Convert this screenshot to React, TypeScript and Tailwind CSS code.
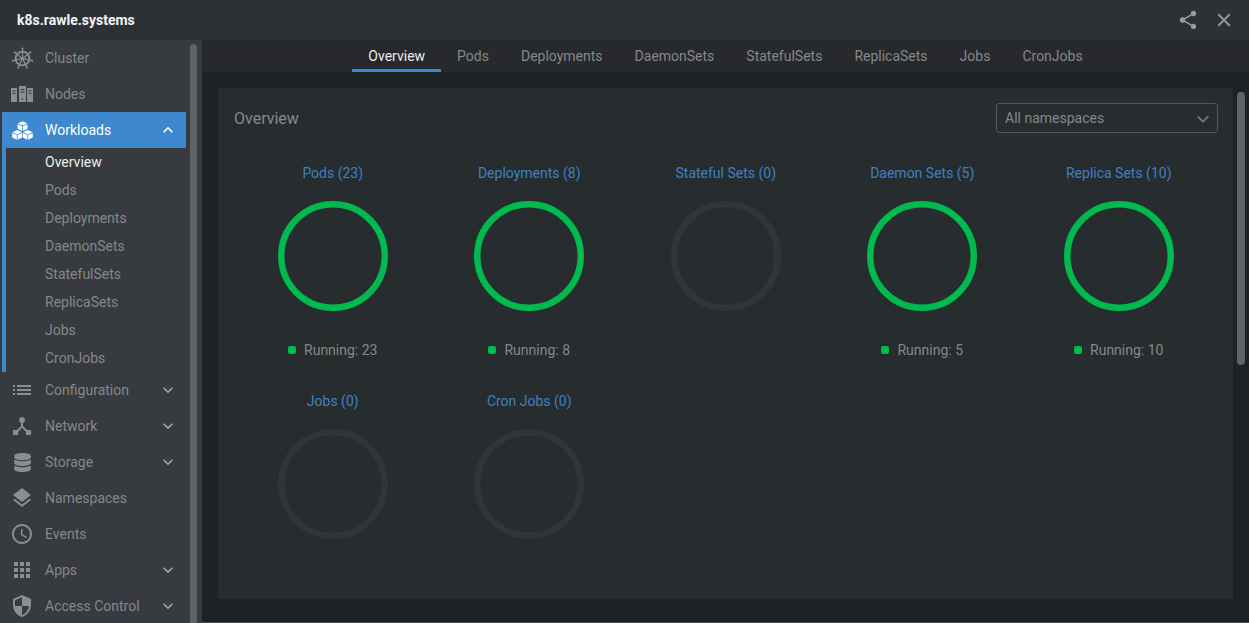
import type { ReactNode } from 'react';
import { FaDatabase } from 'react-icons/fa';
import {
  MdAccessTime,
  MdApps,
  MdClose,
  MdDeviceHub,
  MdExpandLess,
  MdExpandMore,
  MdLayers,
  MdList,
  MdSecurity,
  MdShare,
} from 'react-icons/md';

interface NavItem {
  label: string;
  icon: ReactNode;
  chevron?: boolean;
}

function WheelIcon() {
  const spokes = [0, 51.4, 102.8, 154.2, 205.6, 257, 308.4];
  return (
    <svg viewBox="0 0 24 24" className="w-[23px] h-[23px]" fill="none" stroke="currentColor">
      <circle cx="12" cy="12" r="7.2" strokeWidth="2" />
      <circle cx="12" cy="12" r="1.8" fill="currentColor" strokeWidth="0" />
      {spokes.map((angle) => (
        <g key={angle} transform={`rotate(${angle} 12 12)`}>
          <path d="M12 11V1.2" strokeWidth="1.3" />
          <circle cx="12" cy="1.5" r="1" fill="currentColor" strokeWidth="0" />
        </g>
      ))}
    </svg>
  );
}

function NodesIcon() {
  return (
    <svg viewBox="0 0 22 16" className="w-[22px] h-4" fill="currentColor">
      <path fillRule="evenodd" d="M0 2h6v14H0zM1.5 4.5v1H4.5v-1zm0 2.5v1H4.5V7z" />
      <path fillRule="evenodd" d="M8 0h7v16H8zM9.7 3v1h3.6V3zm0 2.5v1h3.6v-1zM10.5 12.5v1h2v-1z" />
      <path fillRule="evenodd" d="M16 2h6v14h-6zM17.5 4.5v1h3v-1zm0 2.5v1h3V7z" />
    </svg>
  );
}

function Cube({ x, y }: { x: number; y: number }) {
  return (
    <>
      <polygon points={`${x},${y - 4.8} ${x + 4.8},${y - 2.6} ${x},${y - 0.4} ${x - 4.8},${y - 2.6}`} />
      <polygon points={`${x - 5},${y - 1.8} ${x - 0.4},${y + 0.3} ${x - 0.4},${y + 5} ${x - 5},${y + 2.8}`} />
      <polygon points={`${x + 5},${y - 1.8} ${x + 0.4},${y + 0.3} ${x + 0.4},${y + 5} ${x + 5},${y + 2.8}`} />
    </>
  );
}

function CubesIcon() {
  return (
    <svg viewBox="0 0 21 19" className="w-[21px] h-[19px]" fill="currentColor">
      <Cube x={10.5} y={5} />
      <Cube x={5.2} y={13.8} />
      <Cube x={15.8} y={13.8} />
    </svg>
  );
}

const topItems: NavItem[] = [
  { label: 'Cluster', icon: <WheelIcon /> },
  { label: 'Nodes', icon: <NodesIcon /> },
];

const subItems = ['Overview', 'Pods', 'Deployments', 'DaemonSets', 'StatefulSets', 'ReplicaSets', 'Jobs', 'CronJobs'];

const bottomItems: NavItem[] = [
  { label: 'Configuration', icon: <MdList className="w-[24px] h-[24px]" />, chevron: true },
  { label: 'Network', icon: <MdDeviceHub className="w-[24px] h-[24px]" />, chevron: true },
  { label: 'Storage', icon: <FaDatabase className="w-[17px] h-[19px]" />, chevron: true },
  { label: 'Namespaces', icon: <MdLayers className="w-[24px] h-[24px]" /> },
  { label: 'Events', icon: <MdAccessTime className="w-[24px] h-[24px]" /> },
  { label: 'Apps', icon: <MdApps className="w-[24px] h-[24px]" />, chevron: true },
  { label: 'Access Control', icon: <MdSecurity className="w-[24px] h-[24px]" />, chevron: true },
];

const tabs = ['Overview', 'Pods', 'Deployments', 'DaemonSets', 'StatefulSets', 'ReplicaSets', 'Jobs', 'CronJobs'];

const charts = [
  { title: 'Pods (23)', running: 23 },
  { title: 'Deployments (8)', running: 8 },
  { title: 'Stateful Sets (0)', running: 0 },
  { title: 'Daemon Sets (5)', running: 5 },
  { title: 'Replica Sets (10)', running: 10 },
  { title: 'Jobs (0)', running: 0 },
  { title: 'Cron Jobs (0)', running: 0 },
];

function NavRow({ label, icon, chevron }: NavItem) {
  return (
    <div className="h-9 flex items-center text-[#85888b]">
      <div className="w-[43px] pr-[3px] flex justify-center items-center text-[#8b8d90]">{icon}</div>
      <span className="text-sm flex-1">{label}</span>
      {chevron && <MdExpandMore className="w-5 h-5 mr-2 text-[#a0a2a5]" />}
    </div>
  );
}

function Chart({ title, running }: { title: string; running: number }) {
  return (
    <div className="h-[228px] flex flex-col items-center">
      <div className="h-5 text-sm leading-5 text-[#3b82c4]">{title}</div>
      <svg viewBox="0 0 110 110" className="w-[110px] h-[110px] mt-[18px]">
        <circle cx="55" cy="55" r="51.75" fill="none" strokeWidth="6.5" stroke={running > 0 ? '#00ba50' : '#303538'} />
      </svg>
      {running > 0 && (
        <div className="mt-[29px] h-5 flex items-center gap-2 text-sm text-[#85888b]">
          <span className="w-2 h-2 rounded-[2px] bg-[#00ba50]" />
          <span>Running: {running}</span>
        </div>
      )}
    </div>
  );
}

export default function App() {
  return (
    <div className="h-[623px] w-full overflow-hidden flex flex-col bg-[#1e2225] font-['Roboto',sans-serif]">
      <header className="h-10 shrink-0 flex items-center justify-between bg-[#2d3136] pl-[17px] pr-[14px]">
        <span className="text-sm font-bold text-[#f2f3f4]">k8s.rawle.systems</span>
        <div className="flex items-center gap-[14px] text-[#9a9c9f]">
          <MdShare className="w-[22px] h-[22px]" />
          <MdClose className="w-[22px] h-[22px]" />
        </div>
      </header>
      <div className="flex-1 flex min-h-0">
        <aside className="w-[202px] shrink-0 flex pl-[2px] bg-[#373a3e] overflow-hidden">
          <nav className="w-[184px] shrink-0">
            {topItems.map((item) => (
              <NavRow key={item.label} {...item} />
            ))}
            <div className="h-9 flex items-center bg-[#3d88ce] text-white">
              <div className="w-[43px] pr-[3px] flex justify-center items-center">
                <CubesIcon />
              </div>
              <span className="text-sm flex-1">Workloads</span>
              <MdExpandLess className="w-5 h-5 mr-2" />
            </div>
            <div className="border-l-4 border-[#3d88ce]">
              {subItems.map((item, i) => (
                <div key={item} className={`h-7 flex items-center pl-[39px] text-sm ${i === 0 ? 'text-[#eceded]' : 'text-[#85888b]'}`}>
                  {item}
                </div>
              ))}
            </div>
            {bottomItems.map((item) => (
              <NavRow key={item.label} {...item} />
            ))}
          </nav>
          <div className="ml-[4px] mt-[4px] w-[7px] h-[620px] rounded-t bg-[#5f6266]" />
        </aside>
        <main className="relative flex-1 min-w-0 flex flex-col border-b border-[#4a4d50]">
          <div className="h-8 shrink-0 flex justify-center bg-[#27292c]">
            {tabs.map((tab, i) => (
              <div
                key={tab}
                className={`h-8 px-4 flex items-center text-sm ${i === 0 ? 'border-b-[3px] border-[#3d88ce] pt-[3px] text-[#eceded]' : 'text-[#85888b]'}`}
              >
                {tab}
              </div>
            ))}
          </div>
          <section className="mx-4 mt-4 h-[511px] px-4 bg-[#272c2f]">
            <div className="h-[75px] flex items-start justify-between pt-[15px]">
              <h2 className="h-[30px] pt-[1px] flex items-center text-base font-normal text-[#85888b]">Overview</h2>
              <div className="w-[222px] h-[30px] ml-auto -mr-[1px] flex items-center justify-between pl-2 pr-[2px] rounded-[3px] border border-[#55585c] text-sm text-[#85888b]">
                <span>All namespaces</span>
                <MdExpandMore className="w-[24px] h-[24px] translate-y-[1px] text-[#6f7275]" />
              </div>
            </div>
            <div className="grid grid-cols-5 pl-[0.5px]">
              {charts.map((chart) => (
                <Chart key={chart.title} {...chart} />
              ))}
            </div>
          </section>
          <div className="absolute right-[4px] top-[52px] w-2 h-[273px] rounded bg-[#606367]" />
        </main>
      </div>
    </div>
  );
}
